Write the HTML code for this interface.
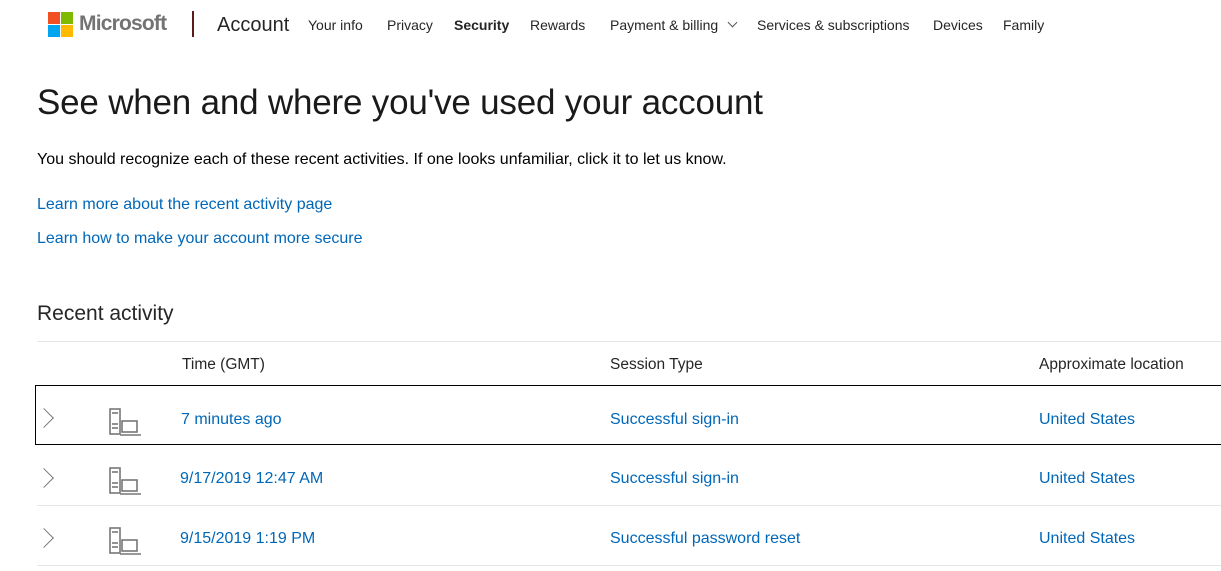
<!DOCTYPE html>
<html><head><meta charset="utf-8"><style>
*{margin:0;padding:0;box-sizing:border-box}
body{width:1221px;height:571px;overflow:hidden;background:#fff;font-family:"Liberation Sans",sans-serif;color:#000;position:relative}
.a{position:absolute;white-space:nowrap}
.nav{font-size:14px;color:#262626;top:17px}
.link{color:#0067b8;font-size:16px}
.hd{font-size:15.5px;color:#262626;top:356px}
.chev{position:absolute;width:14px;height:14px;border-right:1.3px solid #777;border-top:1.3px solid #777;transform:rotate(45deg)}
.line{position:absolute;left:37px;right:0;height:1px;background:#e6e6e6}
</style></head><body>
<svg class="a" style="left:48px;top:12px" width="25" height="25" viewBox="0 0 25 25"><rect width="12" height="12" fill="#f25022"/><rect x="13" width="12" height="12" fill="#7fba00"/><rect y="13" width="12" height="12" fill="#00a4ef"/><rect x="13" y="13" width="12" height="12" fill="#ffb900"/></svg>
<div class="a" style="left:79px;top:12px;font-size:21px;color:#737373;font-weight:bold;letter-spacing:-0.8px">Microsoft</div>
<div class="a" style="left:192px;top:11px;width:2px;height:26px;background:#5c1a1a"></div>
<div class="a" style="left:217px;top:14px;font-size:20px;color:#262626">Account</div>
<div class="a nav" style="left:308px">Your info</div>
<div class="a nav" style="left:387px">Privacy</div>
<div class="a nav" style="left:454px;font-weight:bold">Security</div>
<div class="a nav" style="left:530px">Rewards</div>
<div class="a nav" style="left:610px">Payment &amp; billing</div>
<div class="a" style="left:729px;top:19px;width:7px;height:7px;border-right:1px solid #555;border-bottom:1px solid #555;transform:rotate(45deg)"></div>
<div class="a nav" style="left:757px">Services &amp; subscriptions</div>
<div class="a nav" style="left:933px">Devices</div>
<div class="a nav" style="left:1003px">Family</div>
<div class="a" style="left:37px;top:83px;font-size:35px;font-weight:300;color:#1a1a1a;letter-spacing:-0.2px">See when and where you've used your account</div>
<div class="a" style="left:37px;top:151px;font-size:16px;color:#000">You should recognize each of these recent activities. If one looks unfamiliar, click it to let us know.</div>
<div class="a link" style="left:37px;top:196px">Learn more about the recent activity page</div>
<div class="a link" style="left:37px;top:230px">Learn how to make your account more secure</div>
<div class="a" style="left:37px;top:302px;font-size:21px;color:#262626">Recent activity</div>
<div class="line" style="top:341px"></div>
<div class="a hd" style="left:182px">Time (GMT)</div>
<div class="a hd" style="left:610px">Session Type</div>
<div class="a hd" style="left:1039px">Approximate location</div>
<div class="a" style="left:35px;top:385px;width:1200px;height:60px;border:1px solid #000"></div>
<div class="line" style="top:505px"></div>
<div class="line" style="top:565px"></div>
<div class="chev" style="left:37px;top:411px"></div>
<div class="chev" style="left:37px;top:471px"></div>
<div class="chev" style="left:37px;top:531px"></div>
<svg class="a" style="left:109px;top:408px" width="33" height="29" viewBox="0 0 33 29" fill="none" stroke="#777" stroke-width="1.6"><rect x="1" y="1" width="10" height="25"/><line x1="3" y1="5" x2="9" y2="5"/><line x1="3" y1="16" x2="9" y2="16"/><line x1="3" y1="20" x2="9" y2="20"/><rect x="13" y="13" width="15" height="11" fill="#fff"/><path d="M11 27H32"/></svg>
<svg class="a" style="left:109px;top:467px" width="33" height="29" viewBox="0 0 33 29" fill="none" stroke="#777" stroke-width="1.6"><rect x="1" y="1" width="10" height="25"/><line x1="3" y1="5" x2="9" y2="5"/><line x1="3" y1="16" x2="9" y2="16"/><line x1="3" y1="20" x2="9" y2="20"/><rect x="13" y="13" width="15" height="11" fill="#fff"/><path d="M11 27H32"/></svg>
<svg class="a" style="left:109px;top:527px" width="33" height="29" viewBox="0 0 33 29" fill="none" stroke="#777" stroke-width="1.6"><rect x="1" y="1" width="10" height="25"/><line x1="3" y1="5" x2="9" y2="5"/><line x1="3" y1="16" x2="9" y2="16"/><line x1="3" y1="20" x2="9" y2="20"/><rect x="13" y="13" width="15" height="11" fill="#fff"/><path d="M11 27H32"/></svg>
<div class="a link" style="left:181px;top:411px">7 minutes ago</div>
<div class="a link" style="left:610px;top:411px">Successful sign-in</div>
<div class="a link" style="left:1039px;top:411px">United States</div>
<div class="a link" style="left:180px;top:470px">9/17/2019 12:47 AM</div>
<div class="a link" style="left:610px;top:470px">Successful sign-in</div>
<div class="a link" style="left:1039px;top:470px">United States</div>
<div class="a link" style="left:180px;top:530px">9/15/2019 1:19 PM</div>
<div class="a link" style="left:610px;top:530px">Successful password reset</div>
<div class="a link" style="left:1039px;top:530px">United States</div>
</body></html>
